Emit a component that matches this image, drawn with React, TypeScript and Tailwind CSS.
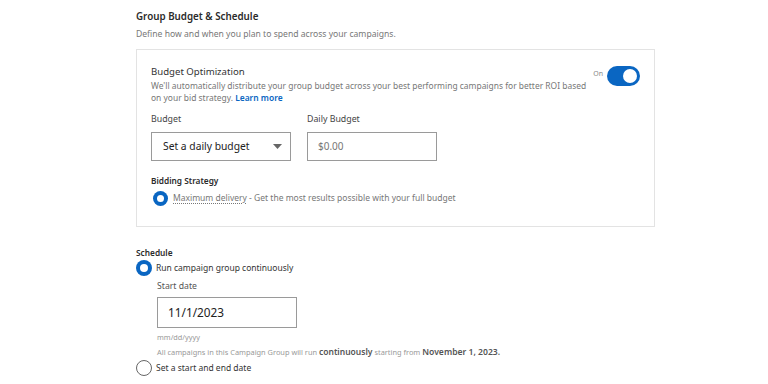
import React from "react";

function Radio({ checked, size = 16 }: { checked: boolean; size?: number }) {
  return checked ? (
    <span
      className="shrink-0 rounded-full bg-[#0a66c2] flex items-center justify-center"
      style={{ width: size, height: size }}
    >
      <span className="block rounded-full bg-white" style={{ width: size * 0.45, height: size * 0.45 }} />
    </span>
  ) : (
    <span
      className="shrink-0 rounded-full border border-[#666] bg-white"
      style={{ width: size, height: size }}
    />
  );
}

export default function App() {
  return (
    <div className="w-[768px] h-[384px] bg-white overflow-hidden pl-[136px] pt-[10px] font-['Noto_Sans',sans-serif] text-[#333]">
      <div className="h-[14px] leading-[14px] text-[9.8px] font-semibold text-[#2b2b2b]">Group Budget &amp; Schedule</div>
      <div className="mt-[4px] h-[12px] leading-[12px] text-[8.6px] text-[#777]">
        Define how and when you plan to spend across your campaigns.
      </div>

      <div className="mt-[9px] w-[519px] h-[178px] border border-[#e3e3e3] pt-[15px] pl-[14px] pr-[14px]">
        <div className="flex justify-between">
          <div>
            <div className="h-[14px] leading-[14px] text-[9.6px] text-[#333]">Budget Optimization</div>
            <div className="mt-[1px] leading-[12px] text-[8.45px] text-[#777] whitespace-nowrap">
              We'll automatically distribute your group budget across your best performing campaigns for better ROI based
              <br />
              on your bid strategy. <span className="font-semibold text-[#0a66c2]">Learn more</span>
            </div>
          </div>
          <div className="flex items-center gap-[4px] h-[20px] mt-[1px]">
            <span className="text-[7px] text-[#888] -mt-[4px]">On</span>
            <span className="w-[33px] h-[20px] rounded-full bg-[#0a66c2] flex items-center justify-end pr-[3px]">
              <span className="block w-[14px] h-[14px] rounded-full bg-white" />
            </span>
          </div>
        </div>

        <div className="mt-[8px] flex gap-[16px]">
          <div>
            <div className="h-[14px] leading-[14px] text-[8.8px] text-[#444]">Budget</div>
            <div className="mt-[6px] w-[140px] h-[29px] border border-[#9a9a9a] flex items-center justify-between pl-[11px] pr-[8px]">
              <span className="text-[10.3px] text-[#222]">Set a daily budget</span>
              <svg width="9" height="5" viewBox="0 0 9 5">
                <path d="M0 0 L9 0 L4.5 5 Z" fill="#666" />
              </svg>
            </div>
          </div>
          <div>
            <div className="h-[14px] leading-[14px] text-[8.8px] text-[#444]">Daily Budget</div>
            <div className="mt-[6px] w-[130px] h-[29px] border border-[#9a9a9a] flex items-center pl-[10px]">
              <span className="text-[10px] text-[#777]">$0.00</span>
            </div>
          </div>
        </div>

        <div className="mt-[13px] h-[14px] leading-[14px] text-[8.3px] font-semibold text-[#2b2b2b]">Bidding Strategy</div>
        <div className="mt-[3px] ml-[2px] flex items-center gap-[5px] h-[15px]">
          <Radio checked size={15} />
          <span className="text-[8.5px] text-[#777] whitespace-nowrap">
            <span className="underline decoration-dotted underline-offset-2">Maximum delivery</span> - Get the most results possible with your full budget
          </span>
        </div>
      </div>

      <div className="mt-[19px] h-[14px] leading-[14px] text-[8.3px] font-semibold text-[#2b2b2b]">Schedule</div>
      <div className="flex items-center gap-[4px] h-[16px]">
        <Radio checked size={16} />
        <span className="text-[8.5px] text-[#333]">Run campaign group continuously</span>
      </div>
      <div className="ml-[21px]">
        <div className="mt-[3px] h-[14px] leading-[14px] text-[8.7px] text-[#555]">Start date</div>
        <div className="mt-[4px] w-[140px] h-[31px] border border-[#9a9a9a] flex items-center pl-[10px]">
          <span className="text-[11.8px] text-[#222]">11/1/2023</span>
        </div>
        <div className="mt-[4px] h-[10px] leading-[10px] text-[7.3px] text-[#999]">mm/dd/yyyy</div>
        <div className="mt-[4px] h-[12px] leading-[12px] text-[7.4px] text-[#999] whitespace-nowrap">
          All campaigns in this Campaign Group will run <span className="text-[8.5px] font-semibold text-[#555]">continuously</span> starting from{" "}
          <span className="text-[8.6px] font-semibold text-[#555]">November 1, 2023.</span>
        </div>
      </div>
      <div className="mt-[2px] flex items-center gap-[4px] h-[16px]">
        <Radio checked={false} size={16} />
        <span className="text-[8.5px] text-[#333]">Set a start and end date</span>
      </div>
    </div>
  );
}
